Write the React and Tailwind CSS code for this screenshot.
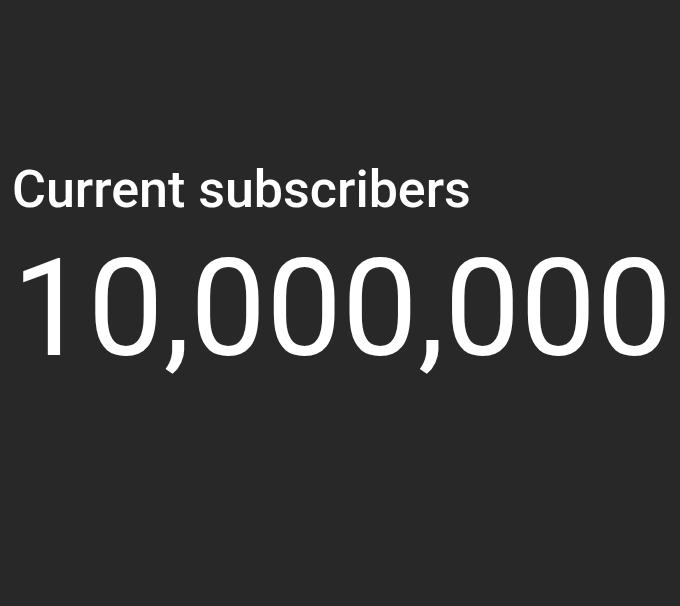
export default function App() {
  return (
    <div className="w-[680px] h-[606px] bg-[#282828] text-white font-['Roboto',sans-serif] pl-3 pt-[160px]">
      <div className="text-[52px] font-medium leading-[60px]">Current subscribers</div>
      <div className="text-[135px] font-normal leading-[120px] mt-[29px]">10,000,000</div>
    </div>
  );
}
